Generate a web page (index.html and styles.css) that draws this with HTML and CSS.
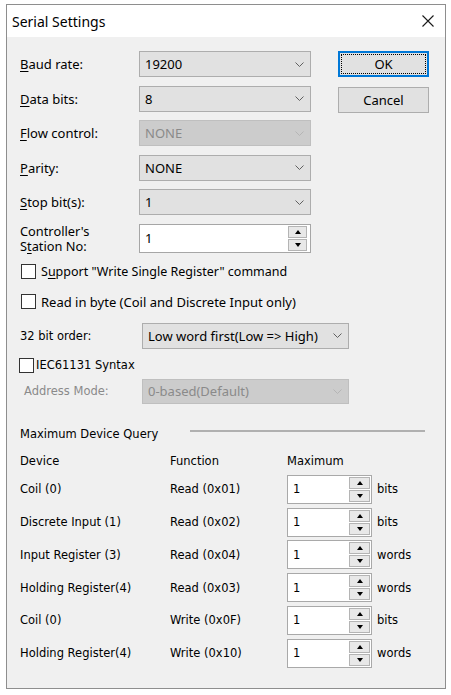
FILE: index.html
```html
<!DOCTYPE html>
<html>
<head>
<meta charset="utf-8">
<link rel="stylesheet" href="styles.css">
</head>
<body>
<div class="window">
  <div class="titlebar">
    <span class="title">Serial Settings</span>
    <svg class="close" width="12" height="12" viewBox="0 0 12 12"><path d="M0.5 0.5 L11.5 11.5 M11.5 0.5 L0.5 11.5" stroke="#1a1a1a" stroke-width="1.1" fill="none"/></svg>
  </div>
  <div class="client">
    <div class="top">
      <div class="form">
        <span class="lbl"><u>B</u>aud rate:</span>
        <div class="combo"><span>19200</span><svg class="chev" width="9" height="5" viewBox="0 0 9 5"><polyline points="0.5,0.5 4.5,4.5 8.5,0.5" fill="none" stroke="#606060" stroke-width="1"/></svg></div>
        <span class="lbl"><u>D</u>ata bits:</span>
        <div class="combo"><span>8</span><svg class="chev" width="9" height="5" viewBox="0 0 9 5"><polyline points="0.5,0.5 4.5,4.5 8.5,0.5" fill="none" stroke="#606060" stroke-width="1"/></svg></div>
        <span class="lbl"><u>F</u>low control:</span>
        <div class="combo disabled"><span>NONE</span><svg class="chev" width="9" height="5" viewBox="0 0 9 5"><polyline points="0.5,0.5 4.5,4.5 8.5,0.5" fill="none" stroke="#b5b5b5" stroke-width="1"/></svg></div>
        <span class="lbl"><u>P</u>arity:</span>
        <div class="combo"><span>NONE</span><svg class="chev" width="9" height="5" viewBox="0 0 9 5"><polyline points="0.5,0.5 4.5,4.5 8.5,0.5" fill="none" stroke="#606060" stroke-width="1"/></svg></div>
        <span class="lbl"><u>S</u>top bit(s):</span>
        <div class="combo"><span>1</span><svg class="chev" width="9" height="5" viewBox="0 0 9 5"><polyline points="0.5,0.5 4.5,4.5 8.5,0.5" fill="none" stroke="#606060" stroke-width="1"/></svg></div>
        <div class="lbl two"><div class="ln">Controller's</div><div class="ln">S<u>t</u>ation No:</div></div>
        <div class="edit"><span class="val">1</span>
          <div class="spinbtns small"><span class="sb"><i class="up"></i></span><span class="sb"><i class="down"></i></span></div>
        </div>
      </div>
      <div class="buttons">
        <div class="btn default"><span class="focus">OK</span></div>
        <div class="btn">Cancel</div>
      </div>
    </div>

    <div class="check c1"><span class="box"></span><span>S<u>u</u>pport "Write Single Register" command</span></div>
    <div class="check c2"><span class="box"></span><span>Read in byte (Coil and Discrete Input only)</span></div>

    <div class="orow">
      <span class="tah olbl">32 bit order:</span>
      <div class="combo wide"><span>Low word first(Low =&gt; High)</span><svg class="chev" width="9" height="5" viewBox="0 0 9 5"><polyline points="0.5,0.5 4.5,4.5 8.5,0.5" fill="none" stroke="#606060" stroke-width="1"/></svg></div>
    </div>

    <div class="check c3"><span class="box"></span><span class="tah">IEC61131 Syntax</span></div>

    <div class="orow arow">
      <span class="tah olbl grey">Address Mode:</span>
      <div class="combo wide disabled"><span>0-based(Default)</span><svg class="chev" width="9" height="5" viewBox="0 0 9 5"><polyline points="0.5,0.5 4.5,4.5 8.5,0.5" fill="none" stroke="#b5b5b5" stroke-width="1"/></svg></div>
    </div>

    <div class="section tah"><span>Maximum Device Query</span><span class="rule"></span></div>

    <div class="table tah">
      <span class="th">Device</span><span class="th">Function</span><span class="th">Maximum</span><span class="th"></span>

      <span>Coil (0)</span><span>Read (0x01)</span>
      <div class="spin"><span class="val">1</span><div class="spinbtns"><span class="sb"><i class="up"></i></span><span class="sb"><i class="down"></i></span></div></div><span class="unit">bits</span>

      <span>Discrete Input (1)</span><span>Read (0x02)</span>
      <div class="spin"><span class="val">1</span><div class="spinbtns"><span class="sb"><i class="up"></i></span><span class="sb"><i class="down"></i></span></div></div><span class="unit">bits</span>

      <span>Input Register (3)</span><span>Read (0x04)</span>
      <div class="spin"><span class="val">1</span><div class="spinbtns"><span class="sb"><i class="up"></i></span><span class="sb"><i class="down"></i></span></div></div><span class="unit">words</span>

      <span>Holding Register(4)</span><span>Read (0x03)</span>
      <div class="spin"><span class="val">1</span><div class="spinbtns"><span class="sb"><i class="up"></i></span><span class="sb"><i class="down"></i></span></div></div><span class="unit">words</span>

      <span>Coil (0)</span><span>Write (0x0F)</span>
      <div class="spin"><span class="val">1</span><div class="spinbtns"><span class="sb"><i class="up"></i></span><span class="sb"><i class="down"></i></span></div></div><span class="unit">bits</span>

      <span>Holding Register(4)</span><span>Write (0x10)</span>
      <div class="spin"><span class="val">1</span><div class="spinbtns"><span class="sb"><i class="up"></i></span><span class="sb"><i class="down"></i></span></div></div><span class="unit">words</span>
    </div>
  </div>
</div>
</body>
</html>
```

FILE: styles.css
```css
* { box-sizing: border-box; }
html, body { margin: 0; padding: 0; background: #ffffff; }
body {
  font-family: "Noto Sans", "Open Sans", sans-serif;
  font-size: 13px;
  color: #000;
}
u { text-decoration: underline; text-underline-offset: 2px; text-decoration-thickness: 1px; }

.window {
  margin: 4px 0 0 6px;
  width: 440px;
  height: 685px;
  border: 1px solid #8e8e8e;
  background: #f0f0f0;
  display: flex;
  flex-direction: column;
}
.titlebar {
  flex: none;
  height: 32px;
  background: #ffffff;
  display: flex;
  align-items: center;
  justify-content: space-between;
  padding: 0 11px 0 5px;
}
.title { font-size: 14px; color: #000; }
.close { display: block; }

.client { padding: 14px 0 0 13px; }

.top { display: flex; align-items: flex-start; }
.form {
  display: grid;
  grid-template-columns: 119px 172px;
  row-gap: 8.6px;
  align-items: center;
}
.lbl { line-height: 16px; }
.lbl.two { line-height: 14px; font-size: 12.8px; display: flex; flex-direction: column; gap: 1px; }

.combo {
  height: 26px;
  border: 1px solid #adadad;
  background: #e1e1e1;
  display: flex;
  align-items: center;
  justify-content: space-between;
  padding: 0 6px 0 5px;
  line-height: 16px;
}
.combo .chev { display: block; }
.combo.disabled { background: #cccccc; border-color: #bfbfbf; color: #8a8a8a; }
.combo.wide { width: 207px; }
.arow .combo { height: 25px; }

.edit {
  height: 29px;
  border: 1px solid #a6a6a6;
  background: #ffffff;
  display: flex;
  align-items: center;
  justify-content: space-between;
  padding: 0 3px 0 5px;
}

.spinbtns {
  display: flex;
  flex-direction: column;
  gap: 1px;
  width: 21px;
}
.spinbtns.small { width: 19px; }
.sb {
  height: 12px;
  border: 1px solid #b4b4b4;
  background: #e8e8e8;
  display: flex;
  align-items: center;
  justify-content: center;
}
.up, .down { display: block; width: 0; height: 0; border-left: 3.5px solid transparent; border-right: 3.5px solid transparent; }
.up { border-bottom: 4px solid #000; }
.down { border-top: 4px solid #000; }

.buttons {
  margin-left: 27px;
  width: 91px;
  display: flex;
  flex-direction: column;
  gap: 10px;
}
.btn {
  height: 26px;
  border: 1px solid #adadad;
  background: #e1e1e1;
  display: flex;
  align-items: center;
  justify-content: center;
}
.btn.default { border: 2px solid #0078d7; padding: 1px; }
.btn .focus {
  flex: 1;
  align-self: stretch;
  border: 1px dotted #000;
  display: flex;
  align-items: center;
  justify-content: center;
}

.check { display: flex; align-items: center; height: 16px; }
.check .box {
  width: 15px;
  height: 15px;
  border: 1px solid #333333;
  background: #ffffff;
  flex: none;
}
.c1 { margin-top: 11px; margin-left: 1px; gap: 5px; font-size: 12.5px; }
.c2 { margin-top: 14px; margin-left: 1px; gap: 5px; }
.c3 { margin-top: 9px; margin-left: -1px; gap: 2px; height: 15px; }

.tah { font-family: "DejaVu Sans", sans-serif; font-size: 11.5px; }

.orow { display: flex; align-items: center; margin-top: 13px; }
.orow .olbl { width: 122px; }
.arow { margin-top: 6px; }
.arow .olbl { padding-left: 4px; }
.grey { color: #8a8a8a; }

.section { display: flex; align-items: center; margin-top: 22px; height: 16px; }
.rule { margin-left: 32px; width: 235px; height: 2px; background: #b0b0b0; margin-top: -5px; }

.table {
  display: grid;
  grid-template-columns: 150px 117px 85px auto;
  grid-template-rows: 16px;
  grid-auto-rows: 29px;
  row-gap: 3.8px;
  align-items: center;
  margin-top: 13px;
}
.table > .th { align-self: center; }
.table > .th:nth-child(-n+4) { margin-bottom: 3.4px; }
.spin {
  height: 29px;
  border: 1px solid #a9a9a9;
  background: #ffffff;
  display: flex;
  align-items: center;
  justify-content: space-between;
  padding: 0 1px 0 5px;
}
.unit { padding-left: 5px; }
```
